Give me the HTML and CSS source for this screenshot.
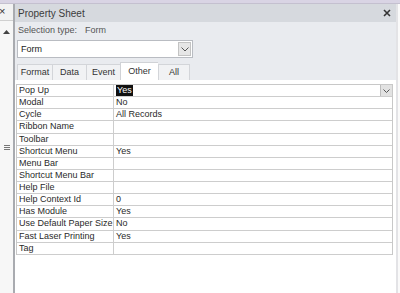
FILE: index.html
```html
<!DOCTYPE html>
<html>
<head>
<meta charset="utf-8">
<link rel="stylesheet" href="styles.css">
</head>
<body>
<div class="topstrip"></div>
<div class="main">
  <div class="leftstrip">
    <div class="lhead"><span class="lx">×</span></div>
    <div class="lup"><svg width="7" height="4" viewBox="0 0 7 4"><path d="M0 4 L3.5 0 L7 4 Z" fill="#444"/></svg></div>
    <div class="lmenu"><svg width="6" height="6" viewBox="0 0 6 6"><path d="M0 1.5H6M0 3.5H6M0 5.5H6" stroke="#777" stroke-width="1"/></svg></div>
  </div>
  <div class="panel">
    <div class="titlebar">
      <span class="title">Property Sheet</span>
      <svg class="close" width="8" height="8" viewBox="0 0 8 8"><path d="M1 1L7 7M7 1L1 7" stroke="#333" stroke-width="1.6"/></svg>
    </div>
    <div class="header">
      <div class="seltype"><span>Selection type:</span><span class="selval">Form</span></div>
      <div class="combo">
        <span class="combotext">Form</span>
        <span class="combobtn"><svg width="8" height="5" viewBox="0 0 8 5"><path d="M0.5 0.5L4 4L7.5 0.5" stroke="#555" fill="none" stroke-width="1"/></svg></span>
      </div>
      <div class="tabs">
        <div class="tab t-format">Format</div>
        <div class="tab t-data">Data</div>
        <div class="tab t-event">Event</div>
        <div class="tab active t-other">Other</div>
        <div class="tab t-all">All</div>
      </div>
    </div>
    <div class="content">
      <div class="grid">
        <div class="lbl">Pop Up</div><div class="val first"><span class="sel">Yes</span><span class="ddbtn"><svg width="7" height="4" viewBox="0 0 7 4"><path d="M0.5 0.5L3.5 3.5L6.5 0.5" stroke="#555" fill="none" stroke-width="1"/></svg></span></div>
        <div class="lbl">Modal</div><div class="val">No</div>
        <div class="lbl">Cycle</div><div class="val">All Records</div>
        <div class="lbl">Ribbon Name</div><div class="val"></div>
        <div class="lbl">Toolbar</div><div class="val"></div>
        <div class="lbl">Shortcut Menu</div><div class="val">Yes</div>
        <div class="lbl">Menu Bar</div><div class="val"></div>
        <div class="lbl">Shortcut Menu Bar</div><div class="val"></div>
        <div class="lbl">Help File</div><div class="val"></div>
        <div class="lbl">Help Context Id</div><div class="val">0</div>
        <div class="lbl">Has Module</div><div class="val">Yes</div>
        <div class="lbl">Use Default Paper Size</div><div class="val">No</div>
        <div class="lbl">Fast Laser Printing</div><div class="val">Yes</div>
        <div class="lbl">Tag</div><div class="val"></div>
      </div>
    </div>
  </div>
  <div class="rightedge"></div>
</div>
</body>
</html>
```
FILE: styles.css
```css
* { box-sizing: border-box; }
html, body { margin: 0; padding: 0; }
body {
  width: 400px;
  height: 293px;
  overflow: hidden;
  font-family: "Liberation Sans", Arial, sans-serif;
  font-size: 9px;
  color: #222;
  background: #fff;
  display: flex;
  flex-direction: column;
}
.topstrip {
  height: 4px;
  background: #d9d4e4;
  border-bottom: 1px solid #c4c0cf;
  flex: none;
}
.main {
  flex: 1;
  display: flex;
}
.leftstrip {
  width: 15px;
  background: #f7f7f7;
  border-right: 2px solid #a9abb0;
  display: flex;
  flex-direction: column;
  align-items: center;
  flex: none;
}
.lhead {
  width: 100%;
  height: 17px;
  border-bottom: 1px solid #d0d0d0;
  background: #f2f2f2;
  position: relative;
  overflow: hidden;
}
.lx {
  position: absolute;
  left: -1px;
  top: 1px;
  font-size: 11px;
  color: #333;
}
.lup { margin-top: 5px; height: 6px; }
.lmenu { margin-top: 110px; }
.panel {
  flex: 1;
  display: flex;
  flex-direction: column;
  background: #fff;
}
.titlebar {
  height: 18px;
  background: #d6d9de;
  display: flex;
  align-items: center;
  justify-content: space-between;
  padding: 0 5px 0 3px;
  flex: none;
}
.title {
  font-size: 10px;
  color: #3c3c3c;
}
.header {
  background: #e9ebef;
  padding: 2px 0 0 2px;
  flex: none;
}
.seltype {
  height: 12px;
  line-height: 12px;
  color: #555;
  padding-left: 1px;
  display: flex;
}
.selval { margin-left: 8px; }
.combo {
  margin-top: 4px;
  width: 176px;
  height: 18px;
  background: #fff;
  border: 1px solid #b9bcc2;
  display: flex;
  align-items: center;
  justify-content: space-between;
  padding: 0 1px 0 3px;
}
.combobtn {
  width: 13px;
  height: 14px;
  background: #e6e6e6;
  border: 1px solid #c3c3c3;
  display: flex;
  align-items: center;
  justify-content: center;
}
.tabs {
  margin-top: 4px;
  height: 18px;
  display: flex;
  align-items: flex-end;
}
.tab {
  height: 16px;
  line-height: 15px;
  background: #f1f2f4;
  border: 1px solid #d3d5d9;
  border-bottom: none;
  border-right: none;
  text-align: center;
  color: #333;
}
.t-format { width: 35px; }
.t-data { width: 34px; }
.t-event { width: 34px; }
.t-other { width: 38px; }
.t-all { width: 32px; border-right: 1px solid #d3d5d9; }
.tab.active {
  height: 18px;
  line-height: 16px;
  background: #fff;
  border-color: #d0d2d6;
}
.content {
  flex: 1;
  background: #fff;
  padding: 4px 3px 0 1px;
}
.grid {
  display: grid;
  grid-template-columns: 97px 1fr;
  grid-auto-rows: 12.14px;
  border-top: 1px solid #c8c8c8;
  border-left: 1px solid #c8c8c8;
  border-right: 1px solid #c8c8c8;
}
.lbl, .val {
  border-bottom: 1px solid #cdcdcd;
  line-height: 11px;
  white-space: nowrap;
  overflow: hidden;
}
.lbl {
  border-right: 1px solid #cdcdcd;
  padding-left: 2px;
  color: #2a2a2a;
}
.val {
  padding-left: 2px;
  color: #2a2a2a;
}
.val.first {
  display: flex;
  justify-content: space-between;
  align-items: stretch;
  padding-right: 0;
}
.sel {
  background: #111;
  color: #fff;
  padding: 0 1px;
}
.ddbtn {
  width: 12px;
  background: #e2e2e2;
  border-left: 1px solid #bdbdbd;
  display: flex;
  align-items: center;
  justify-content: center;
}
.rightedge {
  width: 4px;
  border-left: 2px solid #e3e3e6;
  background: #fafafa;
  flex: none;
}
```
